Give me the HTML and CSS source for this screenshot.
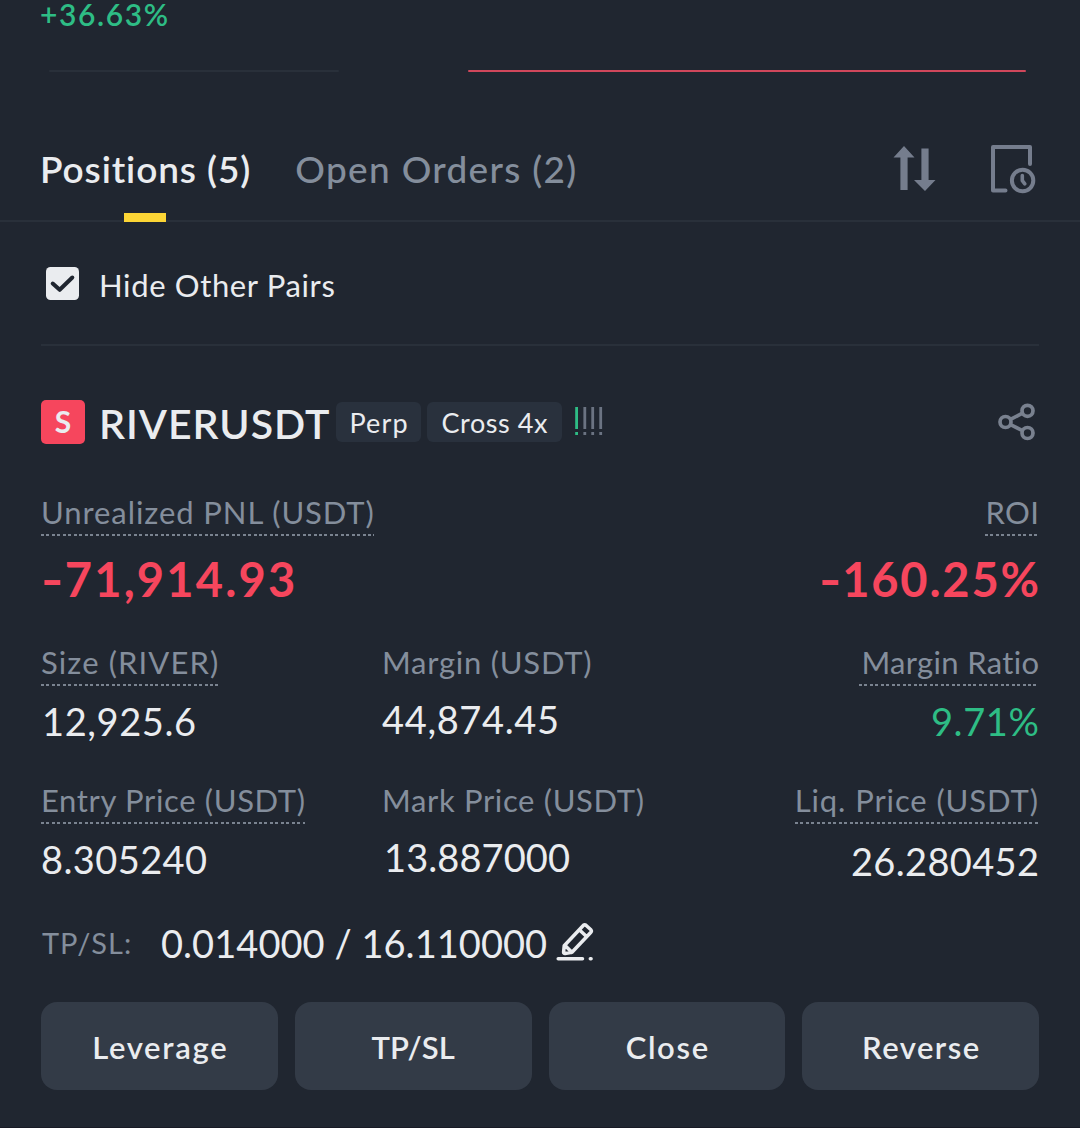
FILE: index.html
```html
<!DOCTYPE html>
<html lang="en">
<head>
<meta charset="utf-8">
<title>Positions</title>
<link rel="stylesheet" href="styles.css">
</head>
<body>
<main class="screen">
  <section class="ticker">
    <p class="change"><span class="t t-change">+36.63%</span></p>
    <div class="bars"><span class="bar bar-muted"></span><span class="bar bar-red"></span></div>
  </section>

  <nav class="tabs">
    <a class="tab active"><span class="t t-positions">Positions (5)</span></a>
    <a class="tab"><span class="t t-orders">Open Orders (2)</span></a>
    <div class="tools">
      <svg class="icon-sort" width="44" height="46" viewBox="0 0 44 46" fill="#757d8d"><path d="M11 0 21.500 11.500H14.600V44H7.400V11.500H.500zM28.400 2.500h7.200V34H42.500L32 45 21 34h7.400z"/></svg>
      <svg class="icon-history" width="46" height="50" viewBox="0 0 46 50" fill="none" stroke="#757d8d" stroke-width="4" stroke-linecap="round" stroke-linejoin="round"><path d="M40 20V3H3V46.500H15.500" /><circle cx="32.600" cy="36.500" r="10.700"/><path d="M32.300 31.500v5.200l2.500 3.200" stroke-width="3.600"/></svg>
    </div>
  </nav>

  <label class="filter">
    <svg width="33" height="33" viewBox="0 0 33 33"><rect width="33" height="33" rx="4.500" fill="#eaecef"/><path d="M6.700 16.500l7 6.300L26.300 10.500" fill="none" stroke="#202630" stroke-width="4" stroke-linecap="round" stroke-linejoin="round"/></svg>
    <span class="t t-hide">Hide Other Pairs</span>
  </label>

  <article class="position">
    <header class="head">
      <span class="side">S</span>
      <h2 class="symbol"><span class="t t-symbol">RIVERUSDT</span></h2>
      <span class="tag tag-perp"><span class="t t-perp">Perp</span></span>
      <span class="tag tag-cross"><span class="t t-cross">Cross 4x</span></span>
      <svg class="risk" width="32" height="30" viewBox="0 0 32 30" stroke-width="2.800" fill="none"><path d="M2.600 0v22M2.600 25v3" stroke="#2ebd85"/><path d="M10.800 0v22M10.800 25v3M18.700 0v22M18.700 25v3M26.700 0v22M26.700 25v3" stroke="#6b7382"/></svg>
      <svg class="share" width="38" height="38" viewBox="0 0 38 38" fill="none" stroke="#79818f" stroke-width="3.700"><circle cx="7.500" cy="19" r="5.500"/><circle cx="29.500" cy="7.800" r="5.500"/><circle cx="29.500" cy="30" r="5.500"/><path d="M12.500 16.400l12-6.200M12.500 21.600l12 6"/></svg>
    </header>

    <div class="grid pnl">
      <div class="cell"><span class="label hint"><span class="t t-pnl">Unrealized PNL (USDT)</span></span><span class="big"><span class="t t-pnl-value"><span class="minus">-</span>71,914.93</span></span></div>
      <div class="cell end"><span class="label hint"><span class="t t-roi">ROI</span></span><span class="big"><span class="t t-roi-value"><span class="minus">-</span>160.25%</span></span></div>
    </div>
    <div class="grid">
      <div class="cell"><span class="label hint"><span class="t t-size">Size (RIVER)</span></span><span class="value"><span class="t t-size-value">12,925.6</span></span></div>
      <div class="cell mid"><span class="label"><span class="t t-margin">Margin (USDT)</span></span><span class="value"><span class="t t-margin-value">44,874.45</span></span></div>
      <div class="cell end"><span class="label hint hint-wide"><span class="t t-ratio">Margin Ratio</span></span><span class="value green"><span class="t t-ratio-value">9.71%</span></span></div>
    </div>
    <div class="grid prices">
      <div class="cell"><span class="label hint"><span class="t t-entry">Entry Price (USDT)</span></span><span class="value"><span class="t t-entry-value">8.305240</span></span></div>
      <div class="cell mid"><span class="label"><span class="t t-mark">Mark Price (USDT)</span></span><span class="value"><span class="t t-mark-value">13.887000</span></span></div>
      <div class="cell end"><span class="label hint"><span class="t t-liq">Liq. Price (USDT)</span></span><span class="value liq"><span class="t t-liq-value">26.280452</span></span></div>
    </div>

    <div class="tpsl">
      <span class="tpsl-label"><span class="t t-tpsl">TP/SL:</span></span>
      <span class="tpsl-value"><span class="t t-tpsl-value">0.014000 / 16.110000</span></span>
      <svg width="38" height="40" viewBox="0 0 38 40" fill="none" stroke="#eaecef" stroke-width="3.500" stroke-linejoin="round" stroke-linecap="round"><path d="M8.200 23.800 27.500 3.200q1.200-1 2.400 0l5 4.600q1 1.200 0 2.400L16 30.300l-7 1.200q-1.500 0-1.400-1.500zM23.300 7.800l7.500 7M8.800 23.300l7 7"/><path d="M2.200 36.800H26.500M34.300 36.800h.800" stroke-width="3.500"/></svg>
    </div>

    <div class="actions">
      <button><span class="t t-lev">Leverage</span></button>
      <button><span class="t t-tp">TP/SL</span></button>
      <button><span class="t t-close">Close</span></button>
      <button><span class="t t-rev">Reverse</span></button>
    </div>
  </article>
</main>
</body>
</html>
```
FILE: styles.css
```css
* { box-sizing: border-box; margin: 0; padding: 0; }
body { background: #202630; color: #eaecef; font-family: Lato, "Noto Sans", sans-serif; font-variant-ligatures: none; }
.screen { width: 1080px; height: 1128px; overflow: hidden; border-bottom: 1px solid #181a25; }
svg { display: block; flex: none; }

/* Tracked text: the trailing letter gap is taken back */
.t { display: inline-block; white-space: nowrap; letter-spacing: var(--ls); margin-right: calc(-1 * var(--ls)); }

.ticker { height: 122px; }
.change { height: 70px; padding-left: 40px; font-size: 30px; font-weight: 600; line-height: 28px; color: #2ebd85; }
.bars { display: flex; gap: 129px; padding-left: 49px; }
.bar { height: 2px; }
.bar-muted { width: 290px; background: #29303a; border-radius: 1px; }
.bar-red { width: 558px; background: #d0475b; border-radius: 2px; }

.tabs { display: flex; height: 100px; padding: 0 44px 0 39px; border-bottom: 2px solid #29303a; }
.tab { position: relative; height: 100px; margin-right: 45px; padding-top: 24px; font-size: 37px; font-weight: 500; line-height: 46px; color: #848e9c; }
.tab.active { font-weight: 600; color: #eaecef; }
.tab.active::after { content: ""; position: absolute; left: 85px; bottom: 0; width: 42px; height: 9px; background: #fcd535; }
.tools { display: flex; gap: 52px; margin-left: auto; padding-top: 22px; }
.icon-sort { margin-top: 2px; margin-right: 1px; }

.filter { display: flex; align-items: center; gap: 20px; height: 124px; margin: 0 41px; padding-left: 5px; border-bottom: 2px solid #29303a; font-size: 31px; }
.filter .t { padding-top: 3px; }

.position { padding: 54px 41px 0; }
.head { display: flex; align-items: center; height: 44px; }
.side { flex: none; width: 44px; height: 44px; border-radius: 5px; background: #f6465d; font-size: 30px; font-weight: 700; line-height: 43px; text-align: center; }
.symbol { flex: none; width: 251px; padding: 3px 0 0 14px; font-size: 41px; font-weight: 600; line-height: 44px; }
.tag { flex: none; height: 40px; margin-right: 6px; border-radius: 6px; background: #29313d; font-size: 27px; line-height: 41px; text-align: center; }
.tag-perp { width: 85px; }
.tag-cross { width: 135px; }
.risk { margin-left: 6px; }
.share { margin-left: auto; margin-right: 3px; }

.grid { display: flex; height: 101px; margin-bottom: 37px; }
.pnl { height: 115px; margin: 49px 0 35px; }
.cell { display: flex; flex-direction: column; align-items: flex-start; width: 341px; }
.cell.end { align-items: flex-end; width: auto; margin-left: auto; }
.label { flex: none; height: 43px; padding-top: 1px; font-size: 31px; line-height: 36px; color: #848e9c; }
.hint { background: repeating-linear-gradient(90deg, #7a8390 0 3px, transparent 3px 5.450px) left bottom / 100% 2px no-repeat; }
.hint-wide { padding-left: 2px; }
.big { flex: none; margin-top: 14px; font-size: 47px; font-weight: 700; line-height: 58px; color: #f6465d; }
.minus { display: inline-block; margin-right: 4px; transform: scaleX(1.3); transform-origin: left; }
.value { flex: none; margin-top: 12px; font-size: 38px; line-height: 46px; }
.mid .value { margin-top: 10px; }
.value.liq { margin-top: 14px; }
.green { color: #2ebd85; }

.tpsl { display: flex; height: 46px; line-height: 46px; }
.tpsl-label { width: 120px; padding: 1px 0 0 1px; font-size: 29px; color: #848e9c; }
.tpsl-value { width: 395px; padding-top: 1px; font-size: 38px; }
.tpsl svg { margin-top: 3px; }

.actions { display: grid; grid-template-columns: repeat(4, 1fr); gap: 17px; width: 998px; margin-top: 37px; }
button { height: 88px; border: 0; border-radius: 16px; background: #333b47; color: #eaecef; font: 600 31px/88px Lato, "Noto Sans", sans-serif; padding-top: 1px; }

.t-change { --ls: 1.600px; }
.t-positions { --ls: .900px; margin-left: 1px; }
.t-orders { --ls: 1.300px; }
.t-hide { --ls: .640px; }
.t-symbol { --ls: .980px; }
.t-perp { --ls: 1.140px; }
.t-cross { --ls: .570px; }
.t-pnl { --ls: .920px; }
.t-roi { --ls: .440px; }
.t-pnl-value { --ls: 2.200px; }
.t-roi-value { --ls: 1.800px; }
.t-size { --ls: 1.100px; }
.t-size-value { --ls: .600px; margin-left: 1px; }
.t-margin { --ls: .760px; }
.t-margin-value { --ls: .650px; }
.t-ratio { --ls: .320px; }
.t-ratio-value { --ls: .630px; }
.t-entry { --ls: .650px; }
.t-entry-value { --ls: .400px; }
.t-mark { --ls: .650px; }
.t-mark-value { --ls: .090px; margin-left: 2px; }
.t-liq { --ls: .900px; padding-right: 1px; }
.t-liq-value { --ls: .340px; }
.t-tpsl { --ls: 1px; }
.t-tpsl-value { --ls: .050px; }
.t-lev { --ls: 1.700px; }
.t-tp { --ls: 0px; }
.t-close { --ls: 1.660px; }
.t-rev { --ls: 1.450px; }
```
